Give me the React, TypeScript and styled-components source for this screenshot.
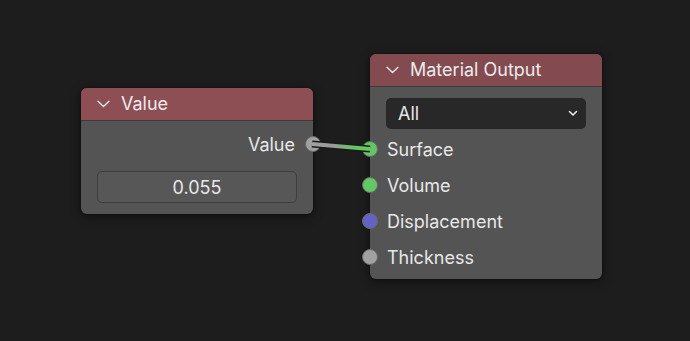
import styled, {createGlobalStyle} from "styled-components";

const GlobalStyle = createGlobalStyle`
  html, body {
    margin: 0;
    padding: 0;
    background: #1d1d1d;
  }
  body {
    font-family: Inter, "Noto Sans", "DejaVu Sans", sans-serif;
    color: #e8e8e8;
  }
`;

type SocketKind = "float" | "shader" | "vector";

const socketColors: Record<SocketKind, string> = {
    float: "#a1a1a1",
    shader: "#63c763",
    vector: "#6363c7",
};

type NodeDef = {
    title: string,
    x: number,
    y: number,
    width: number,
    header: string,
};

function Chevron() {
    return (
        <svg width="13" height="8" viewBox="0 0 13 8">
            <polyline points="1,1.2 6.5,6.5 12,1.2" fill="none" stroke="#e8e8e8" strokeWidth="1.4"
                      strokeLinecap="round" strokeLinejoin="round"/>
        </svg>
    );
}

function SmallChevron() {
    return (
        <svg width="10" height="7" viewBox="0 0 10 7">
            <polyline points="1.5,1.5 5,5 8.5,1.5" fill="none" stroke="#e8e8e8" strokeWidth="1.6"
                      strokeLinecap="round" strokeLinejoin="round"/>
        </svg>
    );
}

function NodeHeader({node}: { node: NodeDef }) {
    return (
        <Header $color={node.header}>
            <Chevron/>
            <Title>{node.title}</Title>
        </Header>
    );
}

function Link() {
    // from Value output to Surface input
    return (
        <LinkSvg width="690" height="341">
            <defs>
                <linearGradient id="lg" x1="312" y1="144" x2="370" y2="149" gradientUnits="userSpaceOnUse">
                    <stop offset="0" stopColor="#a1a1a1"/>
                    <stop offset="0.35" stopColor="#9a9a9a"/>
                    <stop offset="0.75" stopColor="#63c763"/>
                    <stop offset="1" stopColor="#63c763"/>
                </linearGradient>
            </defs>
            <line x1="312" y1="144" x2="370" y2="149" stroke="#1a1a1a" strokeWidth="7"/>
            <line x1="312" y1="144" x2="370" y2="149" stroke="url(#lg)" strokeWidth="4"/>
        </LinkSvg>
    );
}

const valueNode: NodeDef = {title: "Value", x: 81, y: 88, width: 232, header: "#8d4e54"};
const outputNode: NodeDef = {title: "Material Output", x: 370, y: 54, width: 232, header: "#834a50"};

const inputs: { name: string, kind: SocketKind }[] = [
    {name: "Surface", kind: "shader"},
    {name: "Volume", kind: "shader"},
    {name: "Displacement", kind: "vector"},
    {name: "Thickness", kind: "float"},
];

export default function App() {
    return (
        <>
            <GlobalStyle/>
            <Canvas>
                <Link/>
                <Node $x={valueNode.x} $y={valueNode.y} $w={valueNode.width}>
                    <NodeHeader node={valueNode}/>
                    <Body>
                        <OutputRow>
                            <span>Value</span>
                            <Socket $kind="float" $side="right"/>
                        </OutputRow>
                        <NumberField>0.055</NumberField>
                    </Body>
                </Node>
                <Node $x={outputNode.x} $y={outputNode.y} $w={outputNode.width}>
                    <NodeHeader node={outputNode}/>
                    <Body $pad="11px 16px 4px">
                        <Dropdown>
                            <span>All</span>
                            <SmallChevron/>
                        </Dropdown>
                        <InputList>
                            {inputs.map(input =>
                                <InputRow key={input.name}>
                                    <Socket $kind={input.kind} $side="left"/>
                                    <span>{input.name}</span>
                                </InputRow>,
                            )}
                        </InputList>
                    </Body>
                </Node>
            </Canvas>
        </>
    );
}

/* CSS */

const Canvas = styled.div`
  position: relative;
  width: 690px;
  height: 341px;
  overflow: hidden;
  background: #1d1d1d;
`;

const LinkSvg = styled.svg`
  position: absolute;
  left: 0;
  top: 0;
  z-index: 2;
  pointer-events: none;
`;

const Node = styled.div<{ $x: number, $y: number, $w: number }>`
  position: absolute;
  left: ${p => p.$x}px;
  top: ${p => p.$y}px;
  width: ${p => p.$w}px;
  background: #545454;
  border-radius: 6px;
  box-shadow: 0 2px 10px rgba(0, 0, 0, 0.55), 0 0 0 1px #1a1a1a;
  z-index: 1;
`;

const Header = styled.div<{ $color: string }>`
  display: flex;
  align-items: center;
  gap: 11px;
  height: 33px;
  padding-left: 16px;
  background: ${p => p.$color};
  border-radius: 6px 6px 0 0;
  border-bottom: 1px solid #3c3c3c;
  box-sizing: border-box;
`;

const Title = styled.span`
  font-size: 18px;
  color: #ececec;
  line-height: 1;
`;

const Body = styled.div<{ $pad?: string }>`
  display: flex;
  flex-direction: column;
  padding: ${p => p.$pad ?? "11px 16px 11px"};
`;

const OutputRow = styled.div`
  position: relative;
  display: flex;
  justify-content: flex-end;
  align-items: center;
  height: 24px;
  padding-right: 2px;
  font-size: 18px;
  margin-bottom: 15px;
`;

const Socket = styled.span<{ $kind: SocketKind, $side: "left" | "right" }>`
  position: absolute;
  top: 50%;
  ${p => p.$side === "left" ? "left: -8px;" : "right: -24px;"}
  width: 16px;
  height: 16px;
  margin-top: -8px;
  box-sizing: border-box;
  border-radius: 50%;
  background: ${p => socketColors[p.$kind]};
  border: 1.5px solid #6a6a6a;
  z-index: 3;
`;

const NumberField = styled.div`
  height: 32px;
  display: flex;
  align-items: center;
  justify-content: center;
  background: #575757;
  border: 1px solid #3e3e3e;
  border-radius: 5px;
  box-sizing: border-box;
  font-size: 18px;
`;

const Dropdown = styled.div`
  display: flex;
  align-items: center;
  justify-content: space-between;
  height: 31px;
  padding: 0 8px 0 12px;
  background: #282828;
  border-radius: 5px;
  font-size: 18px;
`;

const InputList = styled.div`
  display: flex;
  flex-direction: column;
  margin-top: 2px;
  margin-left: -16px;
`;

const InputRow = styled.div`
  position: relative;
  display: flex;
  align-items: center;
  height: 36px;
  padding-left: 17px;
  font-size: 18px;
`;

/* CSS */
